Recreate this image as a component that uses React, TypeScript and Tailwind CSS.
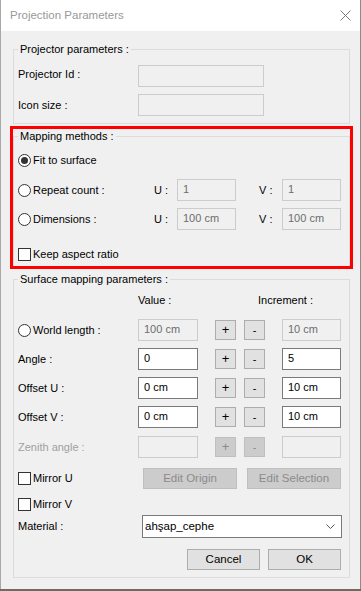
import { ReactNode } from 'react';
import clsx from 'clsx';

function Field({
	value = '',
	disabled = false,
	className = '',
}: {
	value?: string;
	disabled?: boolean;
	className?: string;
}) {
	return (
		<div
			className={clsx(
				'h-[22px] shrink-0 border flex items-center pl-[5px] pb-[1px] whitespace-nowrap',
				disabled
					? 'border-[#cccccc] bg-[#f0f0f0] text-[#6d6d6d]'
					: 'border-[#7a7a7a] bg-white text-black',
				className,
			)}
		>
			{value}
		</div>
	);
}

function Radio({ checked = false }: { checked?: boolean }) {
	return (
		<span className="w-[13px] h-[13px] shrink-0 rounded-full border border-[#333333] bg-white flex items-center justify-center">
			{checked && <span className="w-[7px] h-[7px] rounded-full bg-[#333333]" />}
		</span>
	);
}

function Check() {
	return <span className="w-[13px] h-[13px] shrink-0 border border-[#333333] bg-white" />;
}

function Btn({
	children,
	disabled = false,
	className = '',
}: {
	children: ReactNode;
	disabled?: boolean;
	className?: string;
}) {
	return (
		<div
			className={clsx(
				'shrink-0 border flex items-center justify-center',
				disabled
					? 'border-[#bfbfbf] bg-[#cccccc] text-[#8b8b8b]'
					: 'border-[#adadad] bg-[#e1e1e1] text-black',
				className,
			)}
		>
			{children}
		</div>
	);
}

function Group({
	title,
	className = '',
	children,
}: {
	title: string;
	className?: string;
	children: ReactNode;
}) {
	return (
		<div className={clsx('relative border border-[#dcdcdc]', className)}>
			<span className="absolute left-[4px] -top-[8px] px-[2px] leading-[14px] bg-[#f0f0f0]">
				{title}
			</span>
			{children}
		</div>
	);
}

function ValueRow({
	label,
	value,
	inc,
	radio = false,
	disabled = false,
	muted = false,
	className = '',
}: {
	label: string;
	value: string;
	inc: string;
	radio?: boolean;
	disabled?: boolean;
	muted?: boolean;
	className?: string;
}) {
	return (
		<div className={clsx('flex items-center h-[22px]', className)}>
			<div
				className={clsx(
					'w-[124px] shrink-0 pl-[4px] flex items-center',
					muted ? 'text-[#a0a0a0]' : 'text-black',
				)}
			>
				{radio && <Radio />}
				<span className={radio ? 'ml-[2px]' : ''}>{label}</span>
			</div>
			<Field value={value} disabled={disabled} className="w-[60px]" />
			<Btn disabled={muted} className="ml-[17px] w-[21px] h-[20px] text-[13px]">
				+
			</Btn>
			<Btn disabled={muted} className="ml-[8px] w-[21px] h-[20px]">
				-
			</Btn>
			<Field value={inc} disabled={disabled} className="ml-[17px] w-[59px]" />
		</div>
	);
}

function MethodRow({
	label,
	u,
	v,
	className = '',
}: {
	label: string;
	u: string;
	v: string;
	className?: string;
}) {
	return (
		<div className={clsx('flex items-center h-[22px]', className)}>
			<div className="w-[140px] shrink-0 pl-[4px] flex items-center">
				<Radio />
				<span className="ml-[2px]">{label}</span>
			</div>
			<span className="w-[23px] shrink-0">U :</span>
			<Field value={u} disabled className="w-[59px]" />
			<span className="ml-[23px] w-[23px] shrink-0">V :</span>
			<Field value={v} disabled className="w-[59px]" />
		</div>
	);
}

export default function App() {
	return (
		<div className="w-[361px] h-[591px] flex flex-col bg-[#6f6a62] font-['Liberation_Sans',Arial,sans-serif] text-[11px] text-black">
			<div className="h-[589px] flex flex-col border-x border-l-[#a8a8a8] border-r-[#8c8c8c]">
				<div className="h-[31px] shrink-0 bg-white flex items-center pl-[9px] pr-[9px]">
					<span className="text-[11.5px] text-[#999999]">Projection Parameters</span>
					<svg className="ml-auto" width="11" height="11" viewBox="0 0 11 11">
						<path d="M0.5 0.5L10.5 10.5M10.5 0.5L0.5 10.5" stroke="#7a7a7a" strokeWidth="1" />
					</svg>
				</div>
				<div className="flex-1 bg-[#f0f0f0] pl-[12px] pr-[10px]">
					<Group title="Projector parameters :" className="mt-[18px] h-[75px]">
						<div className="mt-[15px] flex items-center h-[22px]">
							<span className="w-[124px] shrink-0 pl-[4px] pb-[3px]">Projector Id :</span>
							<Field disabled className="w-[126px]" />
						</div>
						<div className="mt-[7px] flex items-center h-[22px]">
							<span className="w-[124px] shrink-0 pl-[4px]">Icon size :</span>
							<Field disabled className="w-[126px]" />
						</div>
					</Group>

					<div className="-mx-[3px] mt-[2px] h-[143px] border-[3px] border-[#ff0000] overflow-hidden">
						<Group title="Mapping methods :" className="mt-[7px] h-[140px]">
							<div className="mt-[12px] flex items-center h-[22px] pl-[4px]">
								<Radio checked />
								<span className="ml-[2px]">Fit to surface</span>
							</div>
							<MethodRow label="Repeat count :" u="1" v="1" className="mt-[8px]" />
							<MethodRow label="Dimensions :" u="100 cm" v="100 cm" className="mt-[7px]" />
							<div className="mt-[13px] flex items-center h-[22px] pl-[4px]">
								<Check />
								<span className="ml-[2px]">Keep aspect ratio</span>
							</div>
						</Group>
					</div>

					<Group title="Surface mapping parameters :" className="mt-[10px] h-[299px]">
						<div className="mt-[13px] flex items-center h-[14px]">
							<span className="ml-[124px] w-[120px] shrink-0">Value :</span>
							<span>Increment :</span>
						</div>
						<ValueRow label="World length :" value="100 cm" inc="10 cm" radio disabled className="mt-[12px]" />
						<ValueRow label="Angle :" value="0" inc="5" className="mt-[7px]" />
						<ValueRow label="Offset U :" value="0 cm" inc="10 cm" className="mt-[7px]" />
						<ValueRow label="Offset V :" value="0 cm" inc="10 cm" className="mt-[7px]" />
						<ValueRow label="Zenith angle :" value="" inc="" disabled muted className="mt-[8px]" />
						<div className="mt-[10px] flex items-center h-[21px]">
							<div className="w-[129px] shrink-0 pl-[4px] flex items-center">
								<Check />
								<span className="ml-[2px]">Mirror U</span>
							</div>
							<Btn disabled className="w-[94px] h-[21px] text-[11.5px]">
								Edit Origin
							</Btn>
							<Btn disabled className="ml-[10px] w-[94px] h-[21px] text-[11.5px]">
								Edit Selection
							</Btn>
						</div>
						<div className="mt-[7px] flex items-center h-[16px] pl-[4px]">
							<Check />
							<span className="ml-[2px]">Mirror V</span>
						</div>
						<div className="mt-[3px] flex items-center h-[23px]">
							<span className="w-[128px] shrink-0 pl-[4px]">Material :</span>
							<div className="w-[200px] h-[23px] shrink-0 border border-[#7a7a7a] bg-white flex items-center pl-[2px] pr-[6px] text-[11.5px]">
								<span>ahşap_cephe</span>
								<svg className="ml-auto" width="9" height="5" viewBox="0 0 9 5">
									<path d="M0.5 0.5L4.5 4.5L8.5 0.5" fill="none" stroke="#555555" strokeWidth="1" />
								</svg>
							</div>
						</div>
						<div className="mt-[11px] flex items-center h-[21px]">
							<Btn className="ml-[173px] w-[73px] h-[21px] text-[11.5px]">Cancel</Btn>
							<Btn className="ml-[8px] w-[73px] h-[21px] text-[11.5px]">OK</Btn>
						</div>
					</Group>
				</div>
			</div>
		</div>
	);
}
